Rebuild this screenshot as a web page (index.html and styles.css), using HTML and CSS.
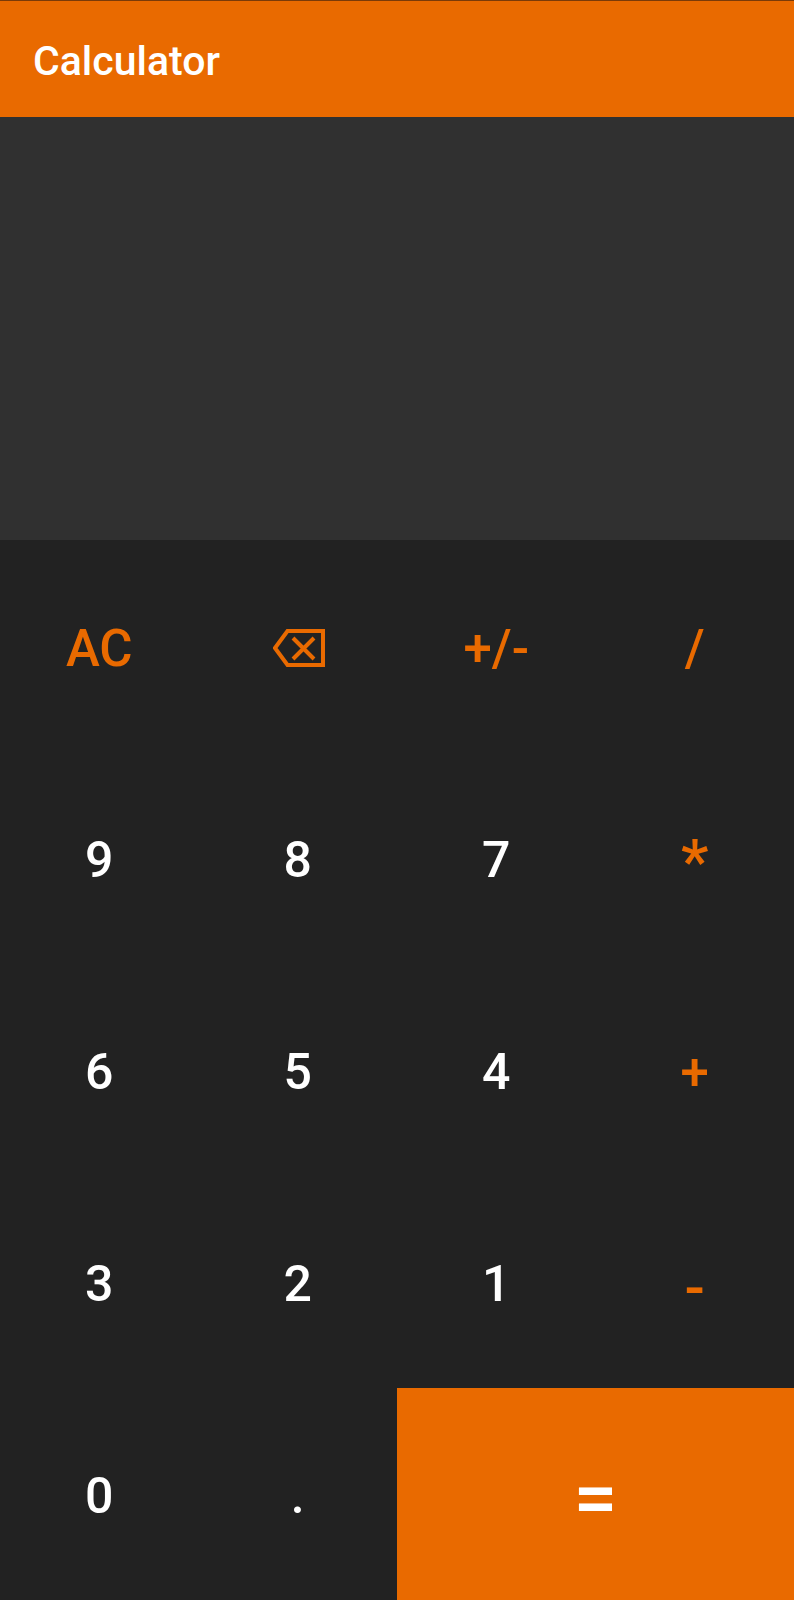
FILE: index.html
```html
<!DOCTYPE html>
<html lang="en">

<head>
    <meta charset="UTF-8">
    <meta name="viewport" content="width=device-width, initial-scale=1.0">
    <title>Calculator</title>
    <link rel="stylesheet" href="styles.css">
</head>

<body>
    <header class="app-bar">
        <h1>Calculator</h1>
    </header>

    <div class="display"></div>

    <div class="keypad">
        <button class="key op">AC</button>
        <button class="key op" aria-label="Backspace">
            <svg class="back-icon" viewBox="0 0 52 38" width="52" height="38">
                <path d="M50 2H14.5L2 19l12.5 17H50z" />
                <path d="M20 9l21 21M41 9L20 30" />
            </svg>
        </button>
        <button class="key op">+/-</button>
        <button class="key op">/</button>

        <button class="key">9</button>
        <button class="key">8</button>
        <button class="key">7</button>
        <button class="key op times">*</button>

        <button class="key">6</button>
        <button class="key">5</button>
        <button class="key">4</button>
        <button class="key op">+</button>

        <button class="key">3</button>
        <button class="key">2</button>
        <button class="key">1</button>
        <button class="key op minus">-</button>

        <button class="key">0</button>
        <button class="key">.</button>
        <button class="key equals">=</button>
    </div>
</body>

</html>
```

FILE: styles.css
```css
* {
    box-sizing: border-box;
}

body {
    margin: 0;
    padding: 0;
    height: 1600px;
    display: flex;
    flex-direction: column;
    font-family: Roboto, "Liberation Sans", sans-serif;
    background-color: #222222;
}

.app-bar {
    height: 117px;
    padding: 4px 33px 0;
    display: flex;
    align-items: center;
    background-color: #e96a00;
    border-top: 1px solid #7a3a08;
}

.app-bar h1 {
    margin: 0;
    color: white;
    font-size: 41px;
    font-weight: 500;
}

.display {
    height: 423px;
    background-color: #303030;
}

.keypad {
    flex: 1;
    display: grid;
    grid-template-columns: repeat(4, 1fr);
    grid-template-rows: repeat(5, 1fr);
}

.key {
    border: none;
    padding: 4px 0 0;
    background: none;
    color: white;
    font-family: inherit;
    font-size: 50px;
    font-weight: 500;
    display: flex;
    align-items: center;
    justify-content: center;
}

.op {
    color: #e96a00;
    font-size: 51px;
}

.times {
    font-size: 62px;
    padding-top: 6px;
}

.minus {
    font-size: 60px;
    padding-top: 10px;
}

.equals {
    grid-column: span 2;
    background-color: #e96a00;
    font-size: 78px;
    padding-top: 8px;
}

.back-icon {
    margin-left: 2px;
    fill: none;
    stroke: #e96a00;
    stroke-width: 4;
}
```
